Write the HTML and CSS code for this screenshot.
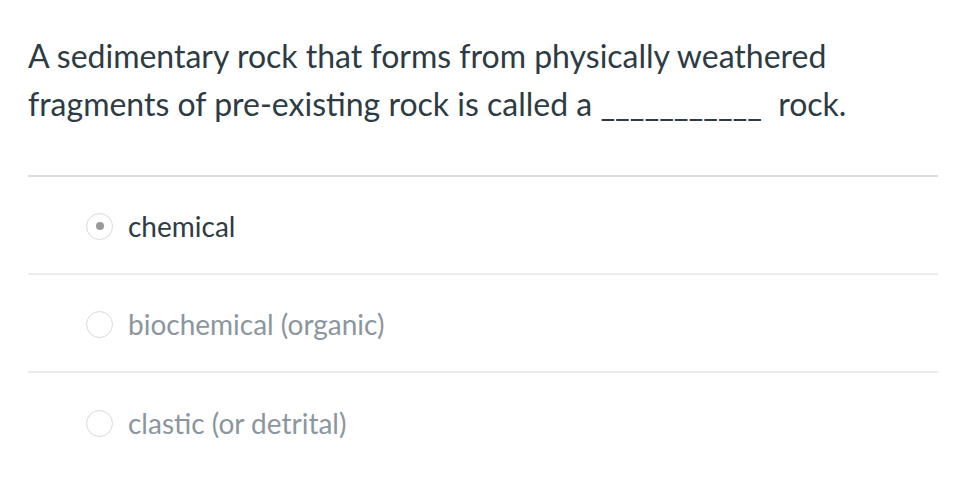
FILE: index.html
```html
<!DOCTYPE html>
<html>
<head>
<meta charset="utf-8">
<link rel="stylesheet" href="styles.css">
</head>
<body>
<div class="question">
  <div class="prompt">A sedimentary rock that forms from physically weathered fragments of pre-existing rock is called a <span class="blank">___________</span> rock.</div>
  <div class="answers">
    <div class="answer selected">
      <span class="radio"><span class="dot"></span></span>
      <span class="label">chemical</span>
    </div>
    <div class="answer">
      <span class="radio"></span>
      <span class="label">biochemical (organic)</span>
    </div>
    <div class="answer">
      <span class="radio"></span>
      <span class="label">clastic (or detrital)</span>
    </div>
  </div>
</div>
</body>
</html>
```

FILE: styles.css
```css
html, body {
  margin: 0;
  padding: 0;
  background: #fff;
}
body {
  font-family: Lato, "Open Sans", sans-serif;
  color: #2d3b45;
}
.question {
  padding: 32px 20px 0 28px;
}
.prompt {
  font-size: 32px;
  line-height: 48px;
  padding-bottom: 47px;
  border-bottom: 2px solid #dcdcdc;
}
.blank {
  display: inline-block;
  margin-right: 8px;
}
.answers {
  display: flex;
  flex-direction: column;
}
.answer {
  display: flex;
  align-items: center;
  height: 98px;
  padding-top: 2px;
  padding-left: 58px;
  border-bottom: 2px solid #ececec;
  box-sizing: border-box;
}
.answer:last-child {
  border-bottom: none;
}
.radio {
  width: 27px;
  height: 27px;
  border-radius: 50%;
  border: 1px solid #dadada;
  box-sizing: border-box;
  display: flex;
  align-items: center;
  justify-content: center;
  margin-right: 15px;
  box-shadow: inset 0 0 1px #eee;
}
.dot {
  width: 8px;
  height: 8px;
  border-radius: 50%;
  background: #999;
}
.label {
  font-size: 28px;
  color: #8b969e;
}
.selected .label {
  color: #2d3b45;
}
```
